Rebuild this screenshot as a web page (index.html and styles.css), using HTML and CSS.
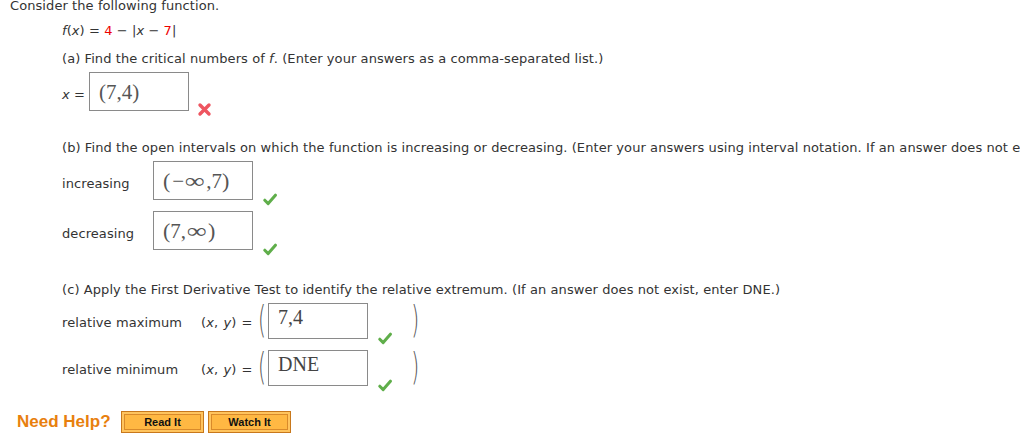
FILE: index.html
```html
<!DOCTYPE html>
<html>
<head>
<meta charset="utf-8">
<link rel="stylesheet" href="styles.css">
</head>
<body>
<div class="page">
  <p class="intro">Consider the following function.</p>
  <div class="q">
    <p class="fx"><i>f</i>(<i>x</i>) = <span class="red">4</span> − |<i>x</i> − <span class="red">7</span>|</p>

    <p class="part part-a">(a) Find the critical numbers of <i>f</i>. (Enter your answers as a comma-separated list.)</p>
    <div class="row row-a">
      <span class="lbl-x"><i>x</i> =</span>
      <span class="box box-tall">(7,4)</span>
      <svg class="mark cross" width="15" height="15" viewBox="0 0 15 15"><path d="M3 3 L12 12 M12 3 L3 12" stroke="#ee5560" stroke-width="3.4" stroke-linecap="round"/></svg>
    </div>

    <p class="part part-b">(b) Find the open intervals on which the function is increasing or decreasing. (Enter your answers using interval notation. If an answer does not exist, enter DNE.)</p>
    <div class="row row-inc">
      <span class="lbl">increasing</span>
      <span class="box box-tall"><span class="mp">(</span><span class="minus">−</span><span class="inf">∞</span>,7<span class="mp">)</span></span>
      <svg class="mark check" width="14" height="13" viewBox="0 0 14 13"><path d="M1.8 7.2 L5.2 10.6 L12.4 2.2" fill="none" stroke="#5fae4a" stroke-width="3" stroke-linecap="round" stroke-linejoin="round"/></svg>
    </div>
    <div class="row row-dec">
      <span class="lbl">decreasing</span>
      <span class="box box-tall"><span class="mp">(</span>7,<span class="inf">∞</span><span class="mp">)</span></span>
      <svg class="mark check" width="14" height="13" viewBox="0 0 14 13"><path d="M1.8 7.2 L5.2 10.6 L12.4 2.2" fill="none" stroke="#5fae4a" stroke-width="3" stroke-linecap="round" stroke-linejoin="round"/></svg>
    </div>

    <p class="part part-c">(c) Apply the First Derivative Test to identify the relative extremum. (If an answer does not exist, enter DNE.)</p>
    <div class="row row-max">
      <span class="lbl lbl-wide">relative maximum</span>
      <span class="xy">(<i>x</i>, <i>y</i>) =</span>
      <span class="paren open">(</span>
      <span class="box box-short">7,4</span>
      <svg class="mark check check-c" width="14" height="13" viewBox="0 0 14 13"><path d="M1.8 7.2 L5.2 10.6 L12.4 2.2" fill="none" stroke="#5fae4a" stroke-width="3" stroke-linecap="round" stroke-linejoin="round"/></svg>
      <span class="paren close">)</span>
    </div>
    <div class="row row-min">
      <span class="lbl lbl-wide">relative minimum</span>
      <span class="xy">(<i>x</i>, <i>y</i>) =</span>
      <span class="paren open">(</span>
      <span class="box box-short">DNE</span>
      <svg class="mark check check-c" width="14" height="13" viewBox="0 0 14 13"><path d="M1.8 7.2 L5.2 10.6 L12.4 2.2" fill="none" stroke="#5fae4a" stroke-width="3" stroke-linecap="round" stroke-linejoin="round"/></svg>
      <span class="paren close">)</span>
    </div>
  </div>

  <div class="help">
    <span class="need">Need Help?</span>
    <span class="btn"><span class="btn-in">Read It</span></span>
    <span class="btn"><span class="btn-in">Watch It</span></span>
  </div>
</div>
</body>
</html>
```

FILE: styles.css
```css
html, body {
  margin: 0;
  padding: 0;
  background: #ffffff;
  overflow: hidden;
}
body {
  width: 1020px;
  height: 447px;
  font-family: "DejaVu Sans", Verdana, sans-serif;
  font-size: 13px;
  line-height: 16px;
  letter-spacing: 0.08px;
  color: #333333;
}
.page {
  white-space: nowrap;
  overflow: hidden;
  width: 1020px;
}
p {
  margin: 0;
}
.intro {
  margin-top: -2px;
  padding-left: 10px;
}
.q {
  padding-left: 62px;
}
.fx {
  margin-top: 9px;
}
.red {
  color: #ee0000;
}
.part-a {
  margin-top: 12px;
}
.row {
  display: flex;
  align-items: center;
}
.row-a {
  margin-top: 5px;
}
.lbl-x {
  width: 27px;
  padding-top: 6px;
}
.box {
  box-sizing: border-box;
  width: 100px;
  border: 1px solid #8a8a8a;
  font-family: "Liberation Serif", "Times New Roman", serif;
  font-size: 21px;
  letter-spacing: 0;
  color: #555555;
  padding-left: 9px;
  display: flex;
  align-items: center;
}
.box-tall {
  height: 39px;
}
.mp {
  font-size: 22px;
}
.minus {
  margin: 0 0 0 2px;
}
.inf {
  display: inline-block;
  transform: scaleX(1.35);
  margin: 0 4px 0 3px;
}
.box-short {
  height: 36px;
  align-items: flex-start;
  padding-top: 5px;
  font-size: 20px;
  color: #444444;
}
.mark {
  align-self: flex-end;
  margin-bottom: -6px;
}
.cross {
  margin-left: 8px;
}
.check {
  margin-left: 10px;
}
.part-b {
  margin-top: 29px;
}
.row-inc {
  margin-top: 5px;
}
.row-dec {
  margin-top: 11px;
}
.lbl {
  width: 91px;
  padding-top: 7px;
}
.part-c {
  margin-top: 32px;
}
.row-max {
  margin-top: 5px;
}
.row-min {
  margin-top: 11px;
}
.lbl-wide {
  width: 139px;
  padding-top: 3px;
}
.xy {
  width: 56px;
  padding-top: 3px;
  word-spacing: 1px;
}
.paren {
  font-family: "DejaVu Sans", sans-serif;
  font-weight: 200;
  font-size: 37px;
  line-height: 36px;
  color: #555555;
  transform: scaleX(0.55);
}
.open {
  width: 13px;
  margin-left: -2px;
}
.close {
  margin-left: 16px;
}
.check-c {
  margin-left: 10px;
}
.help {
  display: flex;
  align-items: center;
  margin-top: 25px;
  padding-left: 17px;
}
.need {
  font-family: "Liberation Sans", Arial, sans-serif;
  font-weight: bold;
  font-size: 17px;
  letter-spacing: 0;
  color: #e8800e;
  width: 104px;
}
.btn {
  box-sizing: border-box;
  width: 83px;
  height: 22px;
  border: 1px solid #c8781c;
  background: #ffc45e;
  padding: 2px;
  margin-right: 4px;
  display: flex;
}
.btn-in {
  flex: 1;
  border: 1px solid #d98a2a;
  background: #ffb843;
  font-family: "Liberation Sans", Arial, sans-serif;
  font-weight: bold;
  font-size: 11px;
  letter-spacing: 0;
  color: #111111;
  display: flex;
  align-items: center;
  justify-content: center;
}
```
